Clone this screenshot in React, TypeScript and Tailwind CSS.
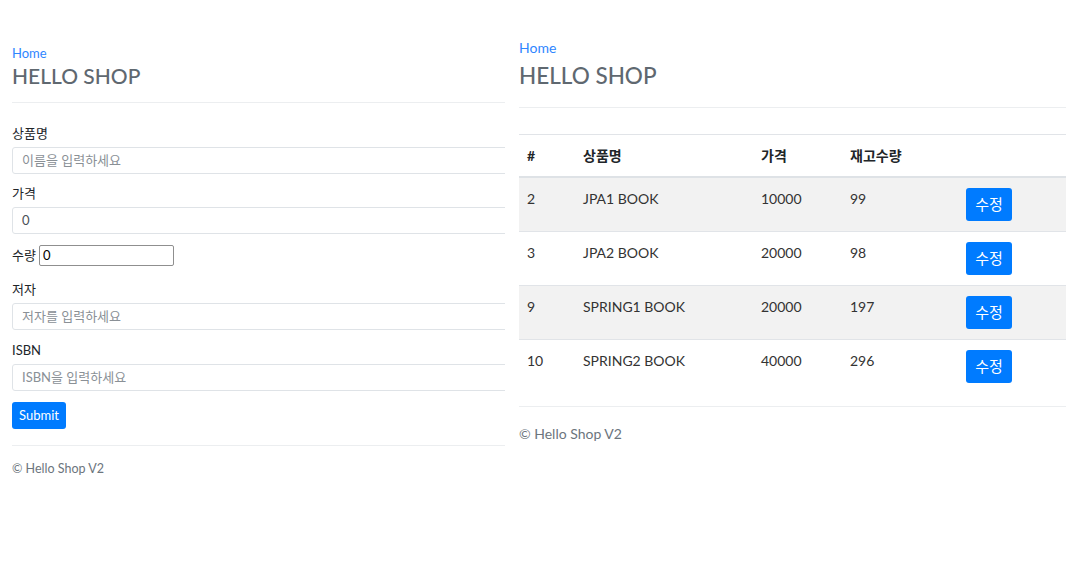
const font = "font-['Lato','Noto_Sans_CJK_KR',sans-serif]";

const items = [
  { id: 2, name: 'JPA1 BOOK', price: 10000, stock: 99 },
  { id: 3, name: 'JPA2 BOOK', price: 20000, stock: 98 },
  { id: 9, name: 'SPRING1 BOOK', price: 20000, stock: 197 },
  { id: 10, name: 'SPRING2 BOOK', price: 40000, stock: 296 },
];

const FormField = ({ label, placeholder, value }: { label: string; placeholder?: string; value?: string }) => (
  <div className="flex flex-col">
    <label className="text-[13px] leading-[18px] text-[#212529]">{label}</label>
    <div className="mt-[5px] h-[27px] w-[500px] rounded-[3px] border border-[#dfe3e7] flex items-center px-[9px] text-[13px]">
      {value ? (
        <span className="text-[#495057]">{value}</span>
      ) : (
        <span className="text-[#8a9096]">{placeholder}</span>
      )}
    </div>
  </div>
);

const ItemForm = () => (
  <div className="w-[493px] ml-[12px] overflow-hidden pt-[44px]">
    <a className="text-[13px] leading-[18px] text-[#2f86ff] block">Home</a>
    <h3 className="text-[21px] leading-[30px] font-medium text-[#5f6870] mt-[-1px]">HELLO SHOP</h3>
    <div className="mt-[11px] h-px bg-[#eceef0]" />

    <div className="mt-[21px] flex flex-col gap-[10px]">
      <FormField label="상품명" placeholder="이름을 입력하세요" />
      <FormField label="가격" value="0" />
    </div>

    <div className="mt-[11px] flex items-center gap-[3px] text-[13px] text-[#212529]">
      <span>수량</span>
      <div className="h-[21px] w-[135px] rounded-[2px] border border-[#8f8f8f] flex items-center px-[3px] text-[13px] text-black">
        0
      </div>
    </div>

    <div className="mt-[14px] flex flex-col gap-[11px]">
      <FormField label="저자" placeholder="저자를 입력하세요" />
      <FormField label="ISBN" placeholder="ISBN을 입력하세요" />
    </div>

    <button className="mt-[11px] h-[27px] w-[54px] rounded-[3px] bg-[#007bff] text-white text-[13px]">Submit</button>

    <div className="mt-[16px] h-px bg-[#eceef0]" />
    <p className="mt-[14px] text-[12.5px] leading-[18px] text-[#6c757d]">© Hello Shop V2</p>
  </div>
);

const cols = 'grid grid-cols-[56px_178px_89px_116px_1fr]';

const ItemList = () => (
  <div className="w-[547px] ml-[14px] pt-[38px]">
    <a className="text-[14px] leading-[19px] text-[#2f86ff] block">Home</a>
    <h3 className="text-[22.5px] leading-[32px] font-medium text-[#5f6870] mt-[3px]">HELLO SHOP</h3>
    <div className="mt-[15px] h-px bg-[#eceef0]" />

    <div className="mt-[26px] border-t border-[#e1e4e8] text-[14px] text-[#212529]">
      <div className={`${cols} h-[43px] items-center border-b-2 border-[#dee2e6] font-bold`}>
        <div className="px-2">#</div>
        <div className="px-2">상품명</div>
        <div className="px-2">가격</div>
        <div className="px-2">재고수량</div>
        <div className="px-2" />
      </div>
      {items.map((item, i) => (
        <div
          key={item.id}
          className={`${cols} h-[54px] ${i % 2 === 0 ? 'bg-[#f2f2f2]' : 'bg-white'} ${i < items.length - 1 ? 'border-b border-[#e1e4e8]' : ''} text-[#333]`}
        >
          <div className="px-2 pt-[11px] leading-[20px]">{item.id}</div>
          <div className="px-2 pt-[11px] leading-[20px]">{item.name}</div>
          <div className="px-2 pt-[11px] leading-[20px]">{item.price}</div>
          <div className="px-2 pt-[11px] leading-[20px]">{item.stock}</div>
          <div className="px-2 pt-[10px]">
            <button className="h-[33px] w-[46px] rounded-[3px] bg-[#007bff] text-white text-[15px]">수정</button>
          </div>
        </div>
      ))}
    </div>

    <div className="mt-[12px] h-px bg-[#eceef0]" />
    <p className="mt-[17px] text-[14px] leading-[20px] text-[#6c757d]">© Hello Shop V2</p>
  </div>
);

export default function App() {
  return (
    <div className={`${font} flex bg-white min-h-[569px] w-[1086px]`}>
      <ItemForm />
      <ItemList />
    </div>
  );
}
